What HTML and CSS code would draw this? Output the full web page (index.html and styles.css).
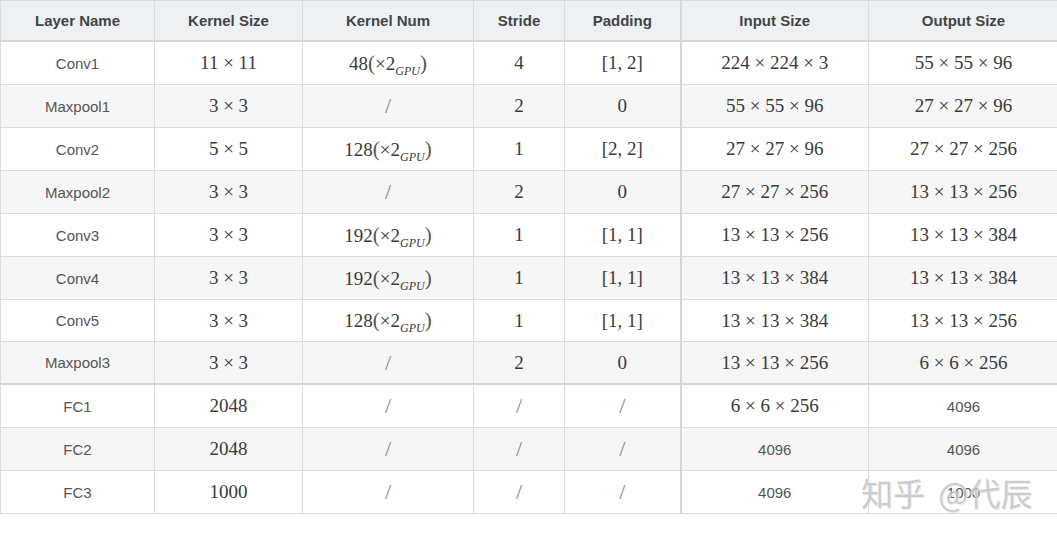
FILE: index.html
```html
<!DOCTYPE html>
<html>
<head>
<meta charset="utf-8">
<link rel="stylesheet" href="styles.css">
</head>
<body>
<div class="wrap">
<table class="net">
  <colgroup>
    <col class="c1"><col class="c2"><col class="c3"><col class="c4"><col class="c5"><col class="c6"><col class="c7">
  </colgroup>
  <thead>
    <tr><th>Layer Name</th><th>Kernel Size</th><th>Kernel Num</th><th>Stride</th><th>Padding</th><th class="split">Input Size</th><th>Output Size</th></tr>
  </thead>
  <tbody>
    <tr><td class="name">Conv1</td><td class="m">11 × 11</td><td class="m">48<span class="p">(</span>×2<sub>GPU</sub><span class="p">)</span></td><td class="m">4</td><td class="m">[1, 2]</td><td class="m split">224 × 224 × 3</td><td class="m">55 × 55 × 96</td></tr>
    <tr><td class="name">Maxpool1</td><td class="m">3 × 3</td><td class="m sl">/</td><td class="m">2</td><td class="m">0</td><td class="m split">55 × 55 × 96</td><td class="m">27 × 27 × 96</td></tr>
    <tr><td class="name">Conv2</td><td class="m">5 × 5</td><td class="m">128<span class="p">(</span>×2<sub>GPU</sub><span class="p">)</span></td><td class="m">1</td><td class="m">[2, 2]</td><td class="m split">27 × 27 × 96</td><td class="m">27 × 27 × 256</td></tr>
    <tr><td class="name">Maxpool2</td><td class="m">3 × 3</td><td class="m sl">/</td><td class="m">2</td><td class="m">0</td><td class="m split">27 × 27 × 256</td><td class="m">13 × 13 × 256</td></tr>
    <tr><td class="name">Conv3</td><td class="m">3 × 3</td><td class="m">192<span class="p">(</span>×2<sub>GPU</sub><span class="p">)</span></td><td class="m">1</td><td class="m">[1, 1]</td><td class="m split">13 × 13 × 256</td><td class="m">13 × 13 × 384</td></tr>
    <tr><td class="name">Conv4</td><td class="m">3 × 3</td><td class="m">192<span class="p">(</span>×2<sub>GPU</sub><span class="p">)</span></td><td class="m">1</td><td class="m">[1, 1]</td><td class="m split">13 × 13 × 384</td><td class="m">13 × 13 × 384</td></tr>
    <tr class="short"><td class="name">Conv5</td><td class="m">3 × 3</td><td class="m">128<span class="p">(</span>×2<sub>GPU</sub><span class="p">)</span></td><td class="m">1</td><td class="m">[1, 1]</td><td class="m split">13 × 13 × 384</td><td class="m">13 × 13 × 256</td></tr>
    <tr class="sep"><td class="name">Maxpool3</td><td class="m">3 × 3</td><td class="m sl">/</td><td class="m">2</td><td class="m">0</td><td class="m split">13 × 13 × 256</td><td class="m">6 × 6 × 256</td></tr>
    <tr><td class="name">FC1</td><td class="m">2048</td><td class="m sl">/</td><td class="m sl">/</td><td class="m sl">/</td><td class="m split">6 × 6 × 256</td><td class="name">4096</td></tr>
    <tr><td class="name">FC2</td><td class="m">2048</td><td class="m sl">/</td><td class="m sl">/</td><td class="m sl">/</td><td class="name split">4096</td><td class="name">4096</td></tr>
    <tr><td class="name">FC3</td><td class="m">1000</td><td class="m sl">/</td><td class="m sl">/</td><td class="m sl">/</td><td class="name split">4096</td><td class="name">1000</td></tr>
  </tbody>
</table>
<div class="mark">知乎 @代辰</div>
</div>
</body>
</html>
```

FILE: styles.css
```css
html, body {
  margin: 0;
  padding: 0;
  background: #fff;
}
.wrap {
  position: relative;
  width: 1057px;
  height: 536px;
  overflow: hidden;
}
.net {
  border-collapse: collapse;
  table-layout: fixed;
  width: 1058px;
  font-family: "Liberation Sans", Arial, sans-serif;
}
.c1 { width: 154px; }
.c2 { width: 148px; }
.c3 { width: 171px; }
.c4 { width: 91px; }
.c5 { width: 116px; }
.c6 { width: 188px; }
.c7 { width: 190px; }
.net th, .net td {
  border: 1px solid #dcdcdc;
  text-align: center;
  padding: 0;
  white-space: nowrap;
}
.net th {
  height: 39px;
  background: #eef1f4;
  color: #444;
  font-size: 15px;
  font-weight: bold;
  border-bottom: 2px solid #d6d6d6;
}
.net td {
  height: 42px;
}
.net tbody tr:nth-child(even) td {
  background: #f6f6f6;
}
.net tr.short td {
  height: 41px;
}
.net tr.sep td {
  height: 41px;
  border-bottom: 2px solid #d6d6d6;
}
.net .split {
  border-left: 2px solid #d6d6d6;
}
.name {
  font-size: 15px;
  color: #555;
}
.m {
  font-family: "Liberation Serif", "DejaVu Serif", serif;
  font-size: 19px;
  color: #3a3a3a;
}
.m sub {
  font-style: italic;
  font-size: 12px;
  vertical-align: -5px;
  line-height: 0;
}
.m .p {
  font-size: 21px;
  color: #555;
}
.sl {
  color: #888;
  font-size: 22px;
}
.mark {
  position: absolute;
  left: 861px;
  top: 469px;
  font-family: "Noto Sans CJK SC", sans-serif;
  font-size: 32px;
  color: #c4c4c4;
  letter-spacing: 0;
  word-spacing: 6px;
  text-shadow: 0 0 1px #fff, 1px 1px 0 #e6e6e6;
  opacity: 0.85;
}
```
